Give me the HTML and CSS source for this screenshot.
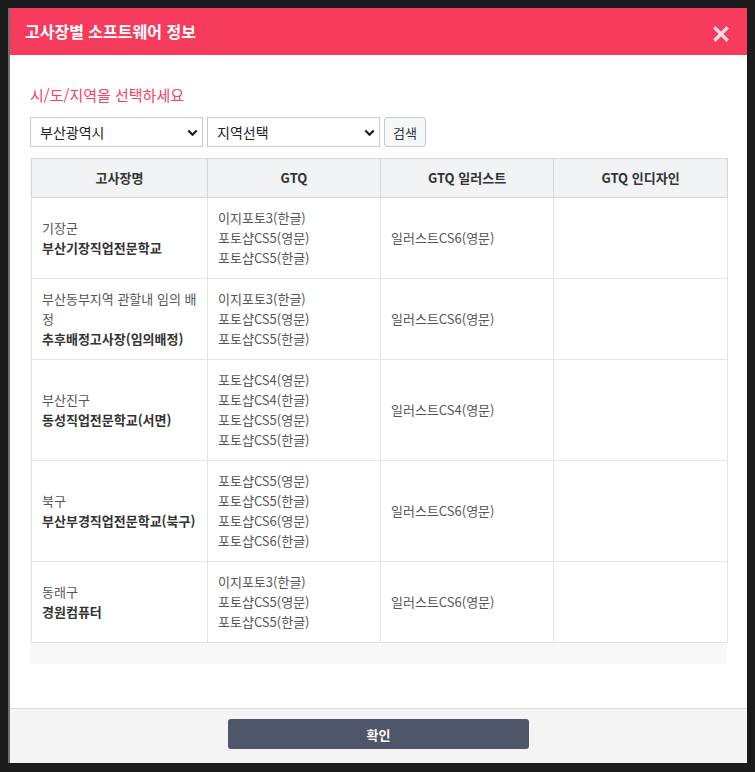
FILE: index.html
```html
<!DOCTYPE html>
<html lang="ko">
<head>
<meta charset="utf-8">
<title>고사장별 소프트웨어 정보</title>
<link rel="stylesheet" href="styles.css">
</head>
<body>
<div class="modal">
  <div class="modal-header">
    <h2 class="modal-title">고사장별 소프트웨어 정보</h2>
    <button class="close" type="button" aria-label="닫기">
      <svg width="18" height="18" viewBox="0 0 18 18"><path d="M3.5 3.5 L14.5 14.5 M14.5 3.5 L3.5 14.5" stroke="rgba(255,255,255,0.82)" stroke-width="3.4" stroke-linecap="square" fill="none"/></svg>
    </button>
  </div>
  <div class="modal-body">
    <p class="guide">시/도/지역을 선택하세요</p>
    <div class="controls">
      <div class="select-wrap">
        <select class="select"><option>부산광역시</option></select>
        <svg class="chev" width="11" height="8" viewBox="0 0 11 8"><path d="M1.3 1.5 L5.5 5.7 L9.7 1.5" stroke="#1f1f1f" stroke-width="2.3" fill="none"/></svg>
      </div>
      <div class="select-wrap">
        <select class="select"><option>지역선택</option></select>
        <svg class="chev" width="11" height="8" viewBox="0 0 11 8"><path d="M1.3 1.5 L5.5 5.7 L9.7 1.5" stroke="#1f1f1f" stroke-width="2.3" fill="none"/></svg>
      </div>
      <button class="search" type="button">검색</button>
    </div>
    <div class="table-wrap">
      <table class="tbl">
        <colgroup>
          <col class="c1"><col class="c2"><col class="c3"><col class="c4">
        </colgroup>
        <thead>
          <tr><th>고사장명</th><th>GTQ</th><th>GTQ 일러스트</th><th>GTQ 인디자인</th></tr>
        </thead>
        <tbody>
          <tr>
            <td>기장군<br><b>부산기장직업전문학교</b></td>
            <td>이지포토3(한글)<br>포토샵CS5(영문)<br>포토샵CS5(한글)</td>
            <td>일러스트CS6(영문)</td>
            <td></td>
          </tr>
          <tr>
            <td>부산동부지역 관할내 임의 배정<br><b>추후배정고사장(임의배정)</b></td>
            <td>이지포토3(한글)<br>포토샵CS5(영문)<br>포토샵CS5(한글)</td>
            <td>일러스트CS6(영문)</td>
            <td></td>
          </tr>
          <tr>
            <td>부산진구<br><b>동성직업전문학교(서면)</b></td>
            <td>포토샵CS4(영문)<br>포토샵CS4(한글)<br>포토샵CS5(영문)<br>포토샵CS5(한글)</td>
            <td>일러스트CS4(영문)</td>
            <td></td>
          </tr>
          <tr>
            <td>북구<br><b>부산부경직업전문학교(북구)</b></td>
            <td>포토샵CS5(영문)<br>포토샵CS5(한글)<br>포토샵CS6(영문)<br>포토샵CS6(한글)</td>
            <td>일러스트CS6(영문)</td>
            <td></td>
          </tr>
          <tr>
            <td>동래구<br><b>경원컴퓨터</b></td>
            <td>이지포토3(한글)<br>포토샵CS5(영문)<br>포토샵CS5(한글)</td>
            <td>일러스트CS6(영문)</td>
            <td></td>
          </tr>
        </tbody>
      </table>
    </div>
  </div>
  <div class="modal-footer">
    <button class="ok" type="button">확인</button>
  </div>
</div>
</body>
</html>
```
FILE: styles.css
```css
html, body {
  margin: 0;
  padding: 0;
  background: #1b1b1b;
}
body {
  font-family: "Noto Sans CJK KR", "Noto Sans", sans-serif;
  padding-top: 8px;
}
.modal {
  margin-left: 8px;
  width: 737px;
  border-left: 2px solid #6f6f6f;
  background: #ffffff;
}
.modal-header {
  height: 47px;
  background: #f73b5c;
  display: flex;
  align-items: center;
  justify-content: space-between;
  padding: 0 17px 0 15px;
}
.modal-title {
  margin: 0;
  color: #ffffff;
  font-size: 16px;
  font-weight: 700;
  line-height: 20px;
  padding-bottom: 2px;
}
.close {
  border: 0;
  background: transparent;
  padding: 0;
  width: 18px;
  height: 18px;
  display: flex;
  margin-top: 4px;
}
.modal-body {
  padding: 30px 20px 44px 20px;
}
.guide {
  margin: 0 0 12px 0;
  font-size: 15px;
  line-height: 20px;
  color: #f5405f;
}
.controls {
  display: flex;
  gap: 4px;
  margin-bottom: 11px;
}
.select-wrap {
  position: relative;
  width: 173px;
  height: 30px;
}
.select {
  appearance: none;
  -webkit-appearance: none;
  width: 100%;
  height: 30px;
  border: 1px solid #c8c8d0;
  border-radius: 0;
  background: #ffffff;
  font-family: inherit;
  font-size: 14px;
  color: #222;
  padding: 0 20px 0 9px;
  margin: 0;
}
.chev {
  position: absolute;
  right: 5px;
  top: 12px;
  pointer-events: none;
}
.search {
  width: 42px;
  height: 30px;
  border: 1px solid #c6c8cf;
  border-radius: 3px;
  background: #f6f7f9;
  font-family: inherit;
  font-size: 13px;
  color: #333;
  padding: 0;
}
.table-wrap {
  background: #f8f8f8;
  padding: 0 0 21px 1px;
}
.tbl {
  width: 100%;
  border-collapse: collapse;
  table-layout: fixed;
  font-size: 13px;
  line-height: 20px;
}
.c1 { width: 176px; }
.c2 { width: 173px; }
.c3 { width: 173px; }
.c4 { width: 174px; }
.tbl th {
  background: #f2f3f5;
  border: 1px solid #d5d7dc;
  font-weight: 700;
  color: #333;
  padding: 9px 10px;
  text-align: center;
}
.tbl td {
  background: #ffffff;
  border: 1px solid #e3e4e7;
  border-top: 0;
  padding: 10px 10px;
  vertical-align: middle;
  color: #555;
  text-align: left;
}
.tbl td b {
  color: #333;
  font-weight: 700;
}
.modal-footer {
  border-top: 1px solid #dcdcdc;
  background: #f4f4f4;
  padding: 10px 0 14px;
  display: flex;
  justify-content: center;
}
.ok {
  width: 301px;
  height: 30px;
  border: 0;
  border-radius: 3px;
  background: #4f566a;
  color: #ffffff;
  font-family: inherit;
  font-size: 13px;
  font-weight: 700;
  padding: 0;
}
```
